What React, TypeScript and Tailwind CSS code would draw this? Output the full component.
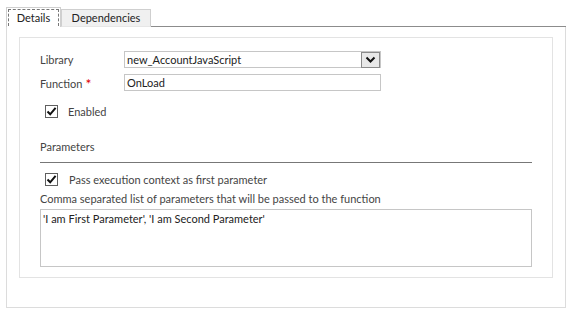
const Check = () => (
  <span className="flex h-[13px] w-[13px] items-center justify-center border border-[#5f5f5f] bg-white">
    <svg width="11" height="11" viewBox="0 0 11 11">
      <path d="M1.5 5.5 L4.2 8.3 L9.6 1.8" fill="none" stroke="#111" strokeWidth="2" />
    </svg>
  </span>
);

export default function App() {
  return (
    <div className="h-[316px] w-[578px] bg-white pl-[6px] pt-[7px] font-['Lato',sans-serif] text-[11px] leading-[16px] text-[#444]">
      <div className="flex h-[20px] w-[560px] items-end">
        <div className="h-[20px] w-[55px] border border-b-0 border-[#cfcfcf] bg-white p-px">
          <div className="flex h-full items-center justify-center border border-dashed border-b-0 border-[#777] text-[#222]">
            Details
          </div>
        </div>
        <div className="flex h-[18px] w-[90px] items-center justify-center border border-[#cfcfcf] border-b-[#e6e6e6] bg-[#f0f0f0] text-[#222]">
          Dependencies
        </div>
        <div className="flex-1 border-b border-[#8c8c8c]" />
      </div>
      <div className="h-[281px] w-[560px] border border-t-0 border-[#dcdcdc] px-[12px] pt-[10px]">
        <div className="h-[241px] w-[534px] border border-[#e3e3e3] px-[20px] pt-[13px]">
          <div className="flex h-[17px] items-center">
            <span className="w-[84px]">Library</span>
            <div className="flex h-[17px] w-[257px] items-center justify-between border border-[#c6c6c6] pl-[2px] text-[#222]">
              <span>new_AccountJavaScript</span>
              <span className="flex h-[16px] w-[19px] items-center justify-center border border-[#8a8a8a] bg-[#e8e8e8]">
                <svg width="11" height="8" viewBox="0 0 11 8">
                  <path d="M1.5 1.5 L5.5 5.5 L9.5 1.5" fill="none" stroke="#111" strokeWidth="2" />
                </svg>
              </span>
            </div>
          </div>
          <div className="mt-[6px] flex h-[17px] items-center">
            <span className="flex w-[84px] items-center pt-[3px]">
              Function<span className="ml-[3px] text-[14px] leading-none text-[#e00000]">*</span>
            </span>
            <div className="flex h-[17px] w-[257px] items-center border border-[#c6c6c6] pl-[2px] text-[#222]">
              OnLoad
            </div>
          </div>
          <div className="mt-[14px] flex h-[13px] items-center pl-[5px]">
            <Check />
            <span className="ml-[10px]">Enabled</span>
          </div>
          <div className="mt-[21px] border-b border-[#777] pb-[7px]">Parameters</div>
          <div className="mt-[10px] flex h-[13px] items-center pl-[5px]">
            <Check />
            <span className="ml-[11px]">Pass execution context as first parameter</span>
          </div>
          <div className="mt-[5px]">
            Comma separated list of parameters that will be passed to the function
          </div>
          <div className="mt-[2px] h-[58px] w-[492px] border border-[#c6c6c6] pl-[2px] pt-px text-[#222]">
            'I am First Parameter', 'I am Second Parameter'
          </div>
        </div>
      </div>
    </div>
  );
}
